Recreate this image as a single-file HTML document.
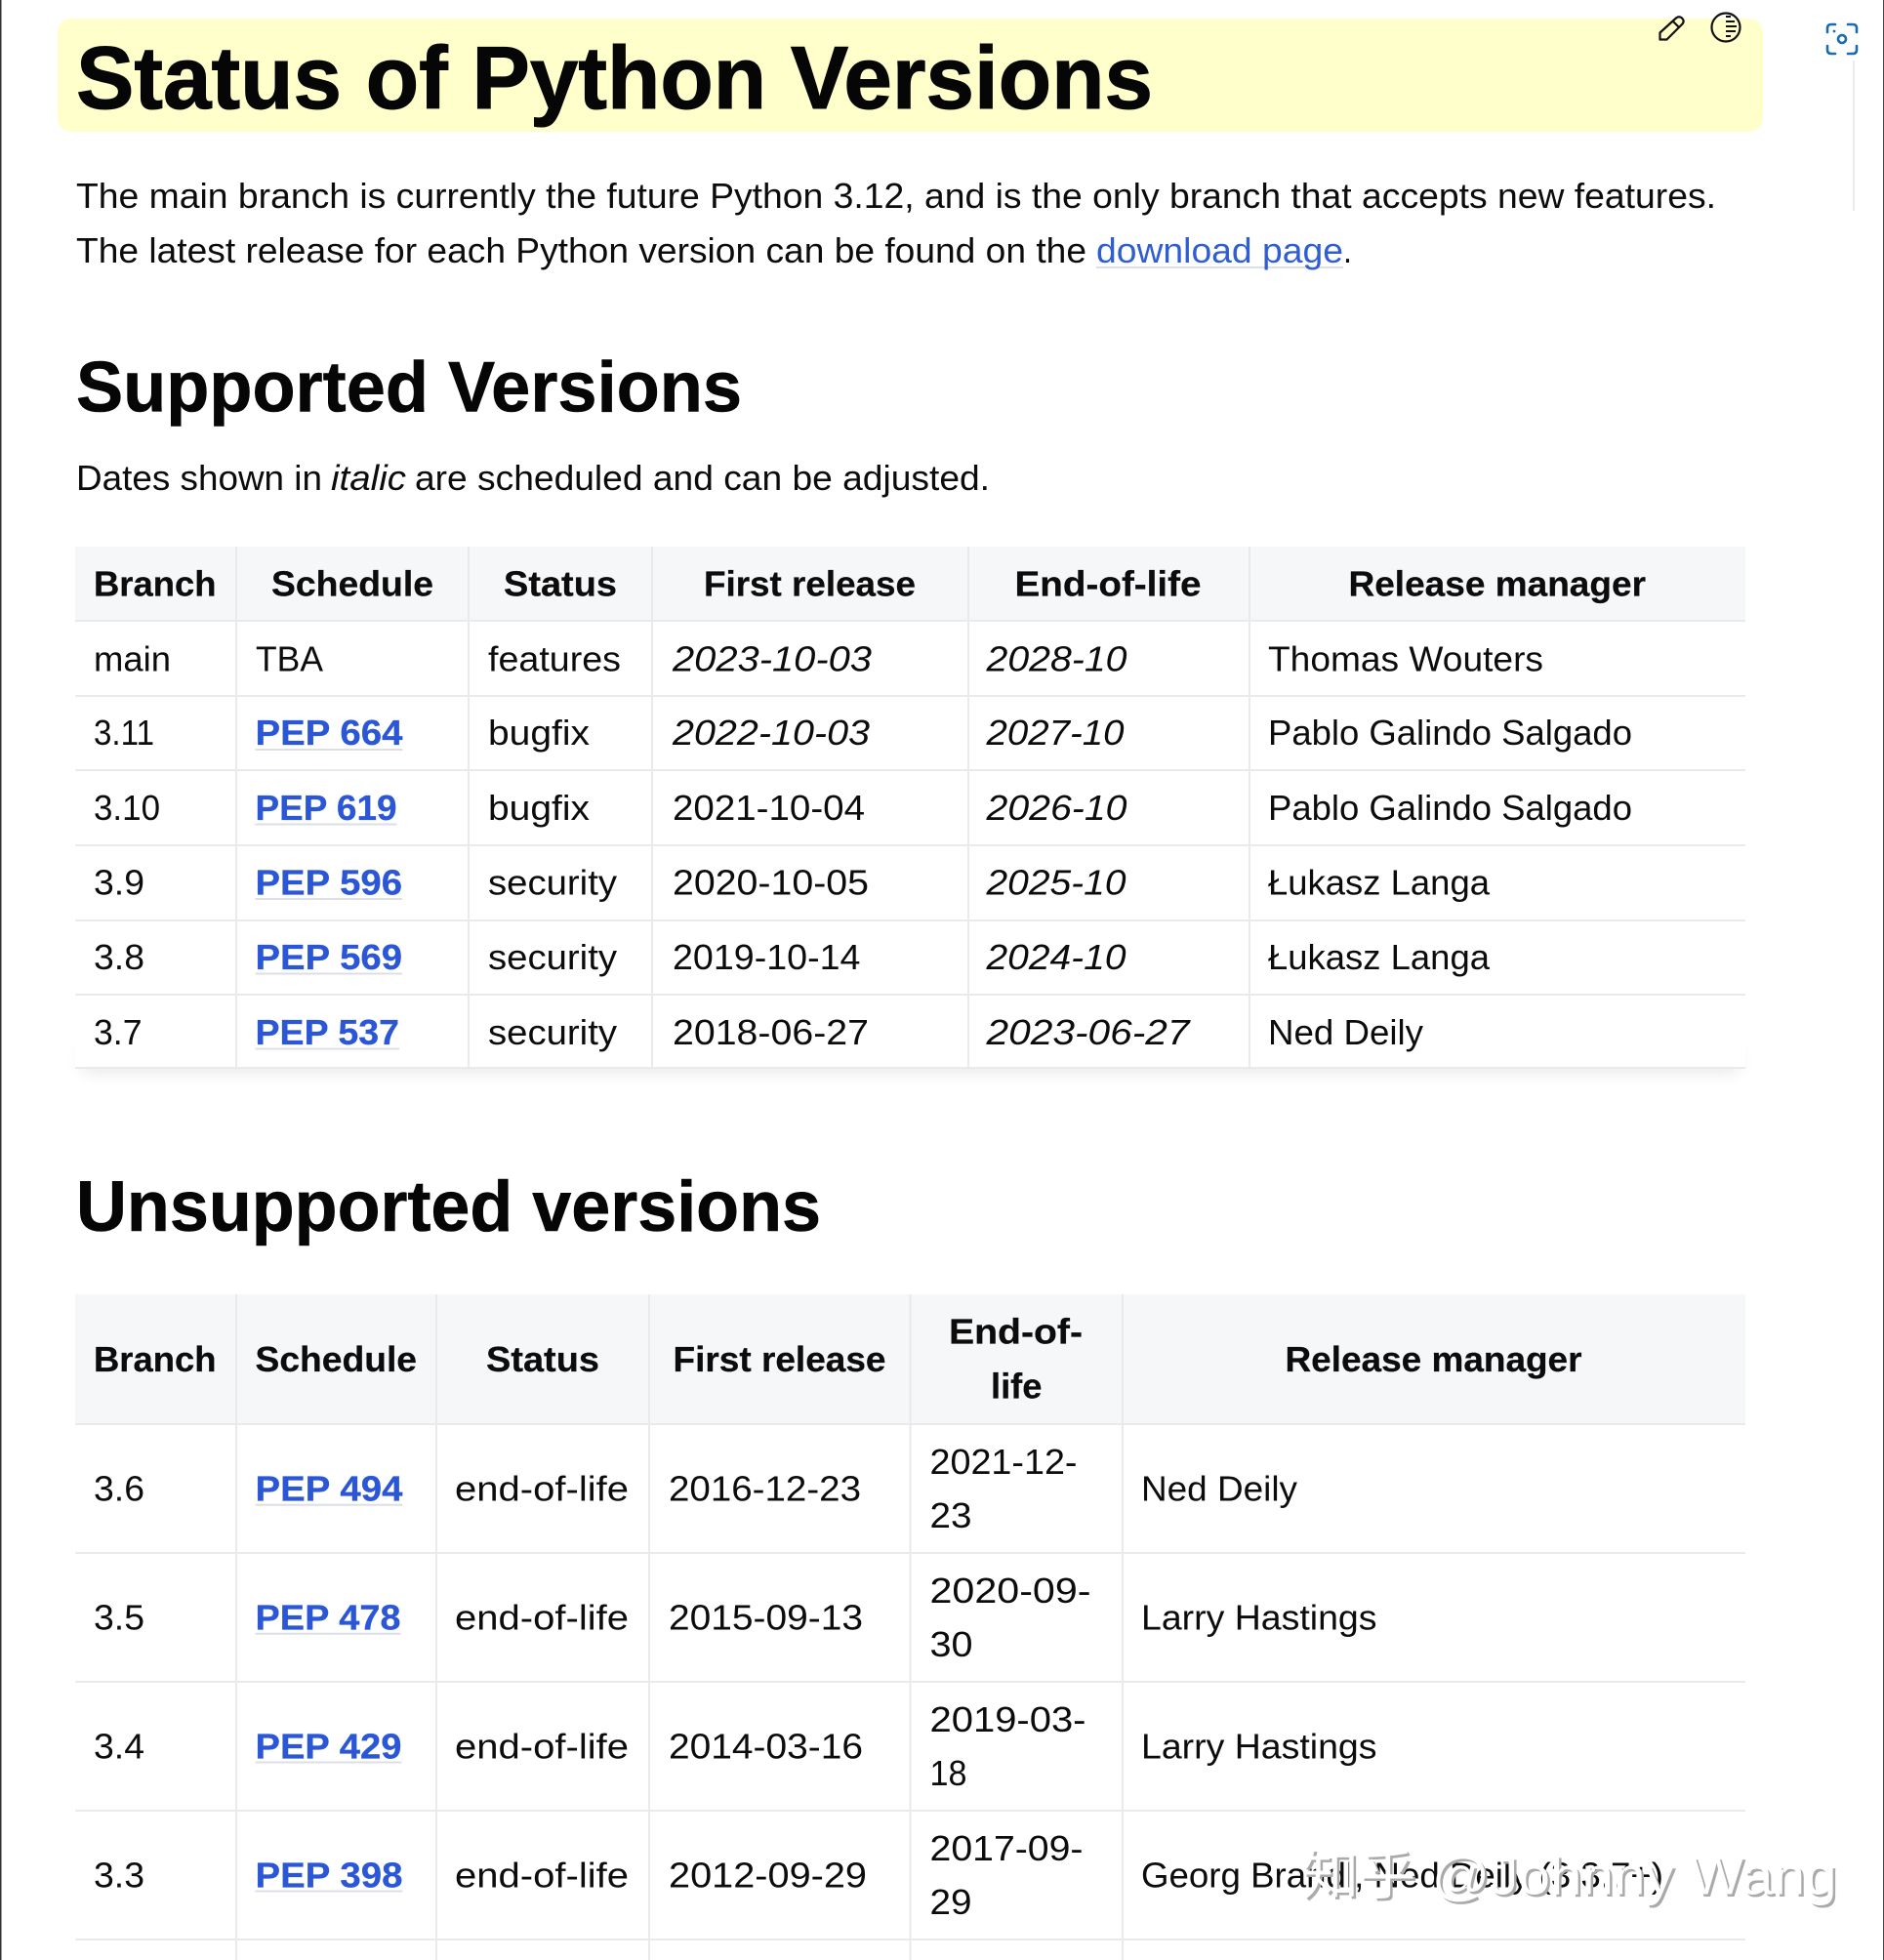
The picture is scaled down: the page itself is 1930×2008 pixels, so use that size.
<!DOCTYPE html>
<html lang="en"><head><meta charset="utf-8"><title>Status of Python Versions</title>
<style>
html,body{margin:0;padding:0;background:#fff;width:1930px;height:2008px;overflow:hidden}
svg{position:absolute;left:0;top:0;display:block}
text{font-family:"Liberation Sans",sans-serif;font-size:36.5px;fill:#0c0c0c}
.b{font-weight:700;stroke:#0c0c0c;stroke-width:.25}.i{font-style:italic}
.l{font-weight:700;fill:#2b57d6;stroke:#2b57d6;stroke-width:.25}
.h1{font-size:91px;font-weight:700;fill:#060606;stroke:#060606;stroke-width:1}
.h2{font-size:73px;font-weight:700;fill:#060606;stroke:#060606;stroke-width:.6}
.w{font-family:"Liberation Sans","Noto Sans CJK SC",sans-serif;font-size:55px}
</style></head><body>
<svg width="1930" height="2008" viewBox="0 0 1930 2008" xmlns="http://www.w3.org/2000/svg">
<defs><filter id="s" x="-5%" y="-50%" width="110%" height="300%"><feGaussianBlur stdDeviation="9"/></filter></defs>
<rect width="1930" height="2008" fill="#fff"/>
<rect x="0" y="0" width="1.5" height="2008" fill="#333"/>
<rect x="1929" y="0" width="1" height="2008" fill="#444"/>
<rect x="1898" y="62" width="2" height="154" fill="#ececec"/>
<rect x="59" y="19" width="1747" height="116" rx="14" fill="#ffffcb"/>

<!-- icons -->
<path d="M1700.5 40.5V33.5L1717 18.5Q1720 16 1723 18.5Q1726 21.5 1723.5 24.5L1707.5 40.5Z M1713.5 21.5L1720.5 28.5" fill="none" stroke="#111" stroke-width="2.2" stroke-linejoin="round"/>
<circle cx="1768" cy="28" r="14.5" fill="none" stroke="#111" stroke-width="2.2"/>
<path d="M1768 17H1773M1768 22H1777M1768 27H1779M1768 32H1778M1768 37H1773" fill="none" stroke="#111" stroke-width="2"/>
<g fill="none" stroke="#1a6cb0" stroke-width="2.6" stroke-linecap="round">
<path d="M1872 33V29Q1872 25 1876 25H1880M1893 25H1898Q1902 25 1902 29V33M1902 47V51Q1902 55 1898 55H1893M1880 55H1876Q1872 55 1872 51V47"/>
<circle cx="1887" cy="40" r="4"/>
</g>
<circle cx="1879" cy="32" r="1.4" fill="#1a6cb0"/>

<!-- intro -->
<text class="h1" x="78" y="111" textLength="1103" lengthAdjust="spacingAndGlyphs">Status of Python Versions</text>
<text x="78" y="213" textLength="1680" lengthAdjust="spacingAndGlyphs">The main branch is currently the future Python 3.12, and is the only branch that accepts new features.</text>
<text x="78" y="269" textLength="1035" lengthAdjust="spacingAndGlyphs">The latest release for each Python version can be found on the</text>
<rect x="1123" y="273" width="253" height="2" fill="#dcdfe6"/>
<text x="1123" y="269" textLength="253" lengthAdjust="spacingAndGlyphs" style="fill:#2f5ed2">download page</text>
<text x="1376" y="269" textLength="9" lengthAdjust="spacingAndGlyphs">.</text>
<text class="h2" x="78" y="421.5" textLength="682" lengthAdjust="spacingAndGlyphs">Supported Versions</text>
<text x="78" y="502" textLength="252" lengthAdjust="spacingAndGlyphs">Dates shown in</text>
<text class="i" x="339" y="502" textLength="77" lengthAdjust="spacingAndGlyphs">italic</text>
<text x="425" y="502" textLength="589" lengthAdjust="spacingAndGlyphs">are scheduled and can be adjusted.</text>

<!-- table 1 -->
<rect x="85" y="1075" width="1695" height="22" fill="#000" opacity=".11" filter="url(#s)"/>
<rect x="77" y="560" width="1711" height="534" fill="#fff"/>
<rect x="77" y="560" width="1711" height="76" fill="#f6f7f9"/>
<g fill="#e9eaec">
<rect x="77" y="635" width="1711" height="2"/><rect x="77" y="712" width="1711" height="2"/><rect x="77" y="788" width="1711" height="2"/><rect x="77" y="865" width="1711" height="2"/><rect x="77" y="942" width="1711" height="2"/><rect x="77" y="1018" width="1711" height="2"/><rect x="77" y="1093" width="1711" height="2"/>
<rect x="241" y="560" width="2" height="534"/><rect x="479" y="560" width="2" height="534"/><rect x="667" y="560" width="2" height="534"/><rect x="991" y="560" width="2" height="534"/><rect x="1279" y="560" width="2" height="534"/>
</g>
<g class="b">
<text class="b" x="96" y="610.7" textLength="125.5" lengthAdjust="spacingAndGlyphs">Branch</text>
<text class="b" x="278" y="610.7" textLength="166" lengthAdjust="spacingAndGlyphs">Schedule</text>
<text class="b" x="516" y="610.7" textLength="116" lengthAdjust="spacingAndGlyphs">Status</text>
<text class="b" x="721" y="610.7" textLength="217" lengthAdjust="spacingAndGlyphs">First release</text>
<text class="b" x="1039.5" y="610.7" textLength="191" lengthAdjust="spacingAndGlyphs">End-of-life</text>
<text class="b" x="1381.5" y="610.7" textLength="304.5" lengthAdjust="spacingAndGlyphs">Release manager</text>
</g>
<!-- rows -->
<text x="96" y="687.7" textLength="79" lengthAdjust="spacingAndGlyphs">main</text>
<text x="262" y="687.7" textLength="69" lengthAdjust="spacingAndGlyphs">TBA</text>
<text x="500" y="687.7" textLength="136" lengthAdjust="spacingAndGlyphs">features</text>
<text class="i" x="689" y="687.7" textLength="204" lengthAdjust="spacingAndGlyphs">2023-10-03</text>
<text class="i" x="1010.5" y="687.7" textLength="144" lengthAdjust="spacingAndGlyphs">2028-10</text>
<text x="1299" y="687.7" textLength="282" lengthAdjust="spacingAndGlyphs">Thomas Wouters</text>

<text x="96" y="763" textLength="62" lengthAdjust="spacingAndGlyphs">3.11</text>
<rect x="261.5" y="767" width="151" height="2" fill="#dcdfe6"/>
<text class="l" x="261.5" y="763" textLength="151" lengthAdjust="spacingAndGlyphs">PEP 664</text>
<text x="500" y="763" textLength="104" lengthAdjust="spacingAndGlyphs">bugfix</text>
<text class="i" x="689" y="763" textLength="202" lengthAdjust="spacingAndGlyphs">2022-10-03</text>
<text class="i" x="1010.5" y="763" textLength="141" lengthAdjust="spacingAndGlyphs">2027-10</text>
<text x="1299" y="763" textLength="373" lengthAdjust="spacingAndGlyphs">Pablo Galindo Salgado</text>

<text x="96" y="840" textLength="68" lengthAdjust="spacingAndGlyphs">3.10</text>
<rect x="261.5" y="843.5" width="145" height="2" fill="#dcdfe6"/>
<text class="l" x="261.5" y="840" textLength="145" lengthAdjust="spacingAndGlyphs">PEP 619</text>
<text x="500" y="840" textLength="104" lengthAdjust="spacingAndGlyphs">bugfix</text>
<text x="689" y="840" textLength="197" lengthAdjust="spacingAndGlyphs">2021-10-04</text>
<text class="i" x="1010.5" y="840" textLength="144" lengthAdjust="spacingAndGlyphs">2026-10</text>
<text x="1299" y="840" textLength="373" lengthAdjust="spacingAndGlyphs">Pablo Galindo Salgado</text>

<text x="96" y="916.5" textLength="52" lengthAdjust="spacingAndGlyphs">3.9</text>
<rect x="261.5" y="920" width="150.5" height="2" fill="#dcdfe6"/>
<text class="l" x="261.5" y="916.5" textLength="150.5" lengthAdjust="spacingAndGlyphs">PEP 596</text>
<text x="500" y="916.5" textLength="132" lengthAdjust="spacingAndGlyphs">security</text>
<text x="689" y="916.5" textLength="201" lengthAdjust="spacingAndGlyphs">2020-10-05</text>
<text class="i" x="1010.5" y="916.5" textLength="143" lengthAdjust="spacingAndGlyphs">2025-10</text>
<text x="1299" y="916.5" textLength="227" lengthAdjust="spacingAndGlyphs">Łukasz Langa</text>

<text x="96" y="993" textLength="52" lengthAdjust="spacingAndGlyphs">3.8</text>
<rect x="261.5" y="996.5" width="150.5" height="2" fill="#dcdfe6"/>
<text class="l" x="261.5" y="993" textLength="150.5" lengthAdjust="spacingAndGlyphs">PEP 569</text>
<text x="500" y="993" textLength="132" lengthAdjust="spacingAndGlyphs">security</text>
<text x="689" y="993" textLength="192.5" lengthAdjust="spacingAndGlyphs">2019-10-14</text>
<text class="i" x="1010.5" y="993" textLength="143" lengthAdjust="spacingAndGlyphs">2024-10</text>
<text x="1299" y="993" textLength="227" lengthAdjust="spacingAndGlyphs">Łukasz Langa</text>

<text x="96" y="1070" textLength="49.5" lengthAdjust="spacingAndGlyphs">3.7</text>
<rect x="261.5" y="1073.5" width="147.5" height="2" fill="#dcdfe6"/>
<text class="l" x="261.5" y="1070" textLength="147.5" lengthAdjust="spacingAndGlyphs">PEP 537</text>
<text x="500" y="1070" textLength="132" lengthAdjust="spacingAndGlyphs">security</text>
<text x="689" y="1070" textLength="201" lengthAdjust="spacingAndGlyphs">2018-06-27</text>
<text class="i" x="1010.5" y="1070" textLength="208" lengthAdjust="spacingAndGlyphs">2023-06-27</text>
<text x="1299" y="1070" textLength="159" lengthAdjust="spacingAndGlyphs">Ned Deily</text>

<!-- unsupported -->
<text class="h2" x="78" y="1261" textLength="763" lengthAdjust="spacingAndGlyphs">Unsupported versions</text>

<rect x="77" y="1326" width="1711" height="133" fill="#f6f7f9"/>
<g fill="#e9eaec">
<rect x="77" y="1458" width="1711" height="2"/><rect x="77" y="1590" width="1711" height="2"/><rect x="77" y="1722" width="1711" height="2"/><rect x="77" y="1854" width="1711" height="2"/><rect x="77" y="1986" width="1711" height="2"/>
<rect x="241" y="1326" width="2" height="682"/><rect x="446" y="1326" width="2" height="682"/><rect x="664" y="1326" width="2" height="682"/><rect x="931.5" y="1326" width="2" height="682"/><rect x="1149" y="1326" width="2" height="682"/>
</g>
<text class="b" x="96" y="1405" textLength="125.5" lengthAdjust="spacingAndGlyphs">Branch</text>
<text class="b" x="261.5" y="1405" textLength="165.5" lengthAdjust="spacingAndGlyphs">Schedule</text>
<text class="b" x="498" y="1405" textLength="116" lengthAdjust="spacingAndGlyphs">Status</text>
<text class="b" x="689.5" y="1405" textLength="218" lengthAdjust="spacingAndGlyphs">First release</text>
<text class="b" x="972" y="1376.5" textLength="137" lengthAdjust="spacingAndGlyphs">End-of-</text>
<text class="b" x="1015" y="1432.5" textLength="52.5" lengthAdjust="spacingAndGlyphs">life</text>
<text class="b" x="1316.5" y="1405" textLength="304" lengthAdjust="spacingAndGlyphs">Release manager</text>

<text x="96" y="1537.5" textLength="52" lengthAdjust="spacingAndGlyphs">3.6</text>
<rect x="261.5" y="1540.7" width="151" height="2" fill="#dcdfe6"/>
<text class="l" x="261.5" y="1537.5" textLength="151" lengthAdjust="spacingAndGlyphs">PEP 494</text>
<text x="466" y="1537.5" textLength="178" lengthAdjust="spacingAndGlyphs">end-of-life</text>
<text x="685" y="1537.5" textLength="197" lengthAdjust="spacingAndGlyphs">2016-12-23</text>
<text x="952.5" y="1510" textLength="151" lengthAdjust="spacingAndGlyphs">2021-12-</text>
<text x="952.5" y="1565" textLength="43" lengthAdjust="spacingAndGlyphs">23</text>
<text x="1169" y="1537.5" textLength="160" lengthAdjust="spacingAndGlyphs">Ned Deily</text>

<text x="96" y="1669.5" textLength="52" lengthAdjust="spacingAndGlyphs">3.5</text>
<rect x="261.5" y="1672.7" width="149" height="2" fill="#dcdfe6"/>
<text class="l" x="261.5" y="1669.5" textLength="149" lengthAdjust="spacingAndGlyphs">PEP 478</text>
<text x="466" y="1669.5" textLength="178" lengthAdjust="spacingAndGlyphs">end-of-life</text>
<text x="685" y="1669.5" textLength="199" lengthAdjust="spacingAndGlyphs">2015-09-13</text>
<text x="952.5" y="1642" textLength="165" lengthAdjust="spacingAndGlyphs">2020-09-</text>
<text x="952.5" y="1697" textLength="44" lengthAdjust="spacingAndGlyphs">30</text>
<text x="1169" y="1669.5" textLength="241.5" lengthAdjust="spacingAndGlyphs">Larry Hastings</text>

<text x="96" y="1801.5" textLength="52" lengthAdjust="spacingAndGlyphs">3.4</text>
<rect x="261.5" y="1804.5" width="150" height="2" fill="#dcdfe6"/>
<text class="l" x="261.5" y="1801.5" textLength="150" lengthAdjust="spacingAndGlyphs">PEP 429</text>
<text x="466" y="1801.5" textLength="178" lengthAdjust="spacingAndGlyphs">end-of-life</text>
<text x="685" y="1801.5" textLength="199" lengthAdjust="spacingAndGlyphs">2014-03-16</text>
<text x="952.5" y="1774" textLength="160" lengthAdjust="spacingAndGlyphs">2019-03-</text>
<text x="952.5" y="1829" textLength="38" lengthAdjust="spacingAndGlyphs">18</text>
<text x="1169" y="1801.5" textLength="241.5" lengthAdjust="spacingAndGlyphs">Larry Hastings</text>

<text x="96" y="1933.5" textLength="52" lengthAdjust="spacingAndGlyphs">3.3</text>
<rect x="261.5" y="1936.5" width="151" height="2" fill="#dcdfe6"/>
<text class="l" x="261.5" y="1933.5" textLength="151" lengthAdjust="spacingAndGlyphs">PEP 398</text>
<text x="466" y="1933.5" textLength="178" lengthAdjust="spacingAndGlyphs">end-of-life</text>
<text x="685" y="1933.5" textLength="203" lengthAdjust="spacingAndGlyphs">2012-09-29</text>
<text x="952.5" y="1906" textLength="157" lengthAdjust="spacingAndGlyphs">2017-09-</text>
<text x="952.5" y="1961" textLength="43" lengthAdjust="spacingAndGlyphs">29</text>
<text x="1169" y="1933.5" textLength="535" lengthAdjust="spacingAndGlyphs">Georg Brandl, Ned Deily (3.3.7+)</text>

<!-- watermark -->
<text class="w" x="1336" y="1943" textLength="548" lengthAdjust="spacingAndGlyphs" style="fill:#aaa">知乎 @Johnny Wang</text>
<text class="w" x="1333.5" y="1940.5" textLength="548" lengthAdjust="spacingAndGlyphs" style="fill:#fff">知乎 @Johnny Wang</text>
</svg>
</body></html>
